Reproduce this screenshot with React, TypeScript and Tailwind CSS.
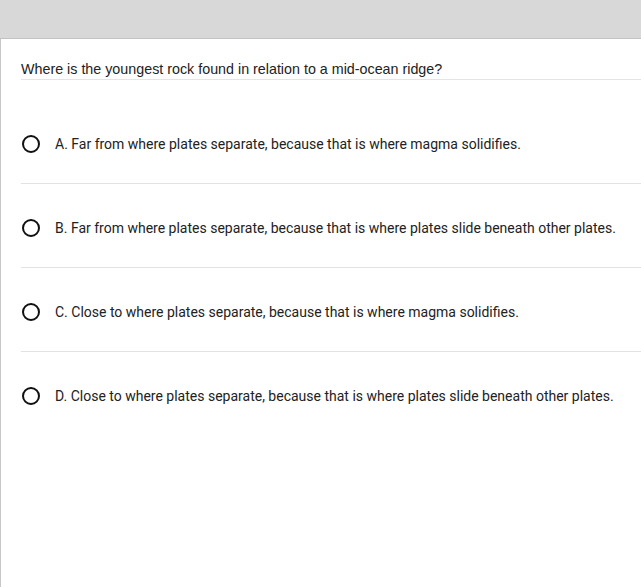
import React from 'react';

const options = [
  'A. Far from where plates separate, because that is where magma solidifies.',
  'B. Far from where plates separate, because that is where plates slide beneath other plates.',
  'C. Close to where plates separate, because that is where magma solidifies.',
  'D. Close to where plates separate, because that is where plates slide beneath other plates.',
];

const App = () => {
  return (
    <div className="w-[641px] h-[587px] bg-white flex flex-col overflow-hidden">
      <div className="h-[39px] shrink-0 bg-[#d8d8d8] border-b border-[#c2c2c2]" />
      <div className="flex-1 border-l border-[#c8c8c8] pl-[20px]">
        <div className="pt-[21px] pb-[1px] border-b border-[#e4e4e4]">
          <p className="text-[14.3px] leading-[18px] text-[#222] font-['Liberation_Sans',Arial,sans-serif]">
            Where is the youngest rock found in relation to a mid-ocean ridge?
          </p>
        </div>
        <div className="pt-[20px]">
          {options.map((opt, i) => (
            <label
              key={opt}
              className={`flex items-center pt-[34px] pb-[29px] ${i < options.length - 1 ? 'border-b border-[#e2e2e2]' : ''}`}
            >
              <span className="w-[20px] h-[20px] flex items-center justify-center mr-[14px]">
                <span className="block w-[18px] h-[18px] rounded-full border-2 border-[#111]" />
              </span>
              <span className="text-[14px] leading-[20px] text-[#222] font-['Roboto',sans-serif]">{opt}</span>
            </label>
          ))}
        </div>
      </div>
    </div>
  );
};

export default App;
